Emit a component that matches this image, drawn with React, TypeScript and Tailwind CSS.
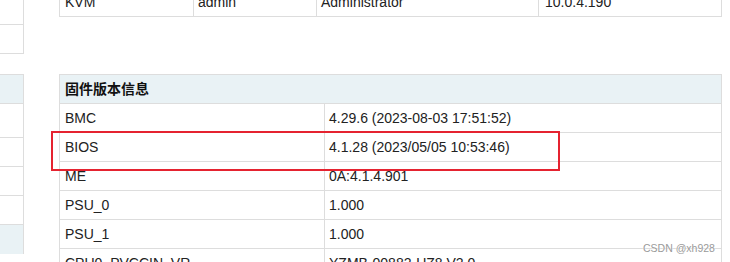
const font = { fontFamily: '"Liberation Sans", Arial, "Noto Sans CJK SC", sans-serif' }

const users = [['KVM', 'admin', 'Administrator', '10.0.4.190']]

const firmware = [
  ['BMC', '4.29.6 (2023-08-03 17:51:52)'],
  ['BIOS', '4.1.28 (2023/05/05 10:53:46)'],
  ['ME', '0A:4.1.4.901'],
  ['PSU_0', '1.000'],
  ['PSU_1', '1.000'],
  ['CPU0_PVCCIN_VR', 'YZMB-00882-UZ8 V2.0'],
]

export default function App() {
  return (
    <div className="relative w-[730px] h-[262px] overflow-hidden bg-white text-[14px] text-[#222]" style={font}>
      <div className="flex">
        {/* left sidebar stub */}
        <div className="w-[24px] shrink-0 flex flex-col">
          <div className="h-[54px] border-r border-[#ddd] flex flex-col">
            <div className="h-[25px] border-b border-[#ddd]" />
            <div className="h-[29px] border-b border-[#ddd]" />
          </div>
          <div className="mt-[20px] border-t border-r border-[#ddd]">
            <div className="h-[29px] bg-[#e9f2f5] border-b border-[#ddd]" />
            <div className="h-[34px] border-b border-[#ddd]" />
            <div className="h-[29px] border-b border-[#ddd]" />
            <div className="h-[29px] border-b border-[#ddd]" />
            <div className="h-[29px] border-b border-[#ddd]" />
            <div className="h-[29px] bg-[#e9f2f5]" />
          </div>
        </div>

        <div className="ml-[35px] w-[663px] shrink-0">
          {/* user table, scrolled partly out of view */}
          <div className="-mt-[12px] border-l border-r border-[#ddd]">
            {users.map((u) => (
              <div key={u[0]} className="flex h-[29px] border-b border-[#ddd] items-center">
                <div className="w-[134px] h-full flex items-center pl-[5px] border-r border-[#ddd]">{u[0]}</div>
                <div className="w-[123px] h-full flex items-center pl-[4px] border-r border-[#ddd]">{u[1]}</div>
                <div className="w-[222px] h-full flex items-center pl-[4px] border-r border-[#ddd]">{u[2]}</div>
                <div className="flex-1 h-full flex items-center pl-[6px]">{u[3]}</div>
              </div>
            ))}
          </div>

          {/* firmware table */}
          <div className="mt-[57px] border border-[#ddd] border-b-0">
            <div className="h-[29px] bg-[#e9f2f5] border-b border-[#ddd] flex items-center pl-[5px] font-bold text-[#111]">
              固件版本信息
            </div>
            {firmware.map(([k, v]) => (
              <div key={k} className="flex h-[29px] border-b border-[#ddd]">
                <div className="w-[265px] flex items-center pl-[5px] border-r border-[#ddd]">{k}</div>
                <div className="flex-1 flex items-center pl-[4px]">{v}</div>
              </div>
            ))}
          </div>
        </div>
      </div>

      {/* highlight annotation */}
      <div className="absolute left-[51px] top-[131px] w-[509px] h-[40px] border-2 border-[#e52330]" />

      <div className="absolute left-[643px] top-[243px] text-[10.5px] leading-none text-[#9a9a9a] [text-shadow:0_0_1px_#fff,0_0_2px_#fff]">
        CSDN @xh928
      </div>
    </div>
  )
}
